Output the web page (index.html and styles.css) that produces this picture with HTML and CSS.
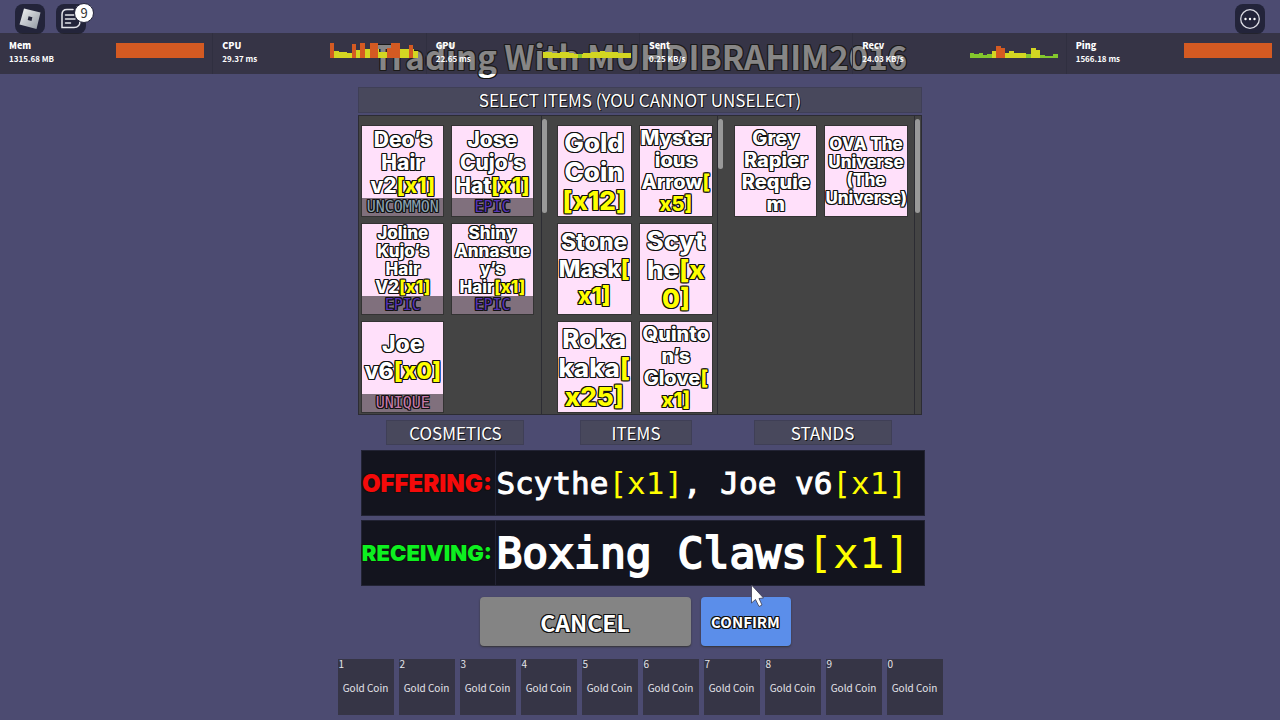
FILE: index.html
```html
<!DOCTYPE html>
<html lang="en">
<head>
<meta charset="utf-8">
<title>Trading</title>
<link rel="stylesheet" href="styles.css">
</head>
<body>
<header class="topbar">
  <button class="top-btn" aria-label="Menu"><svg width="30" height="30" viewBox="0 0 30 30"><defs><linearGradient id="g" x1="0" y1="0" x2="1" y2="1"><stop offset="0" stop-color="#f4f5f6"/><stop offset="1" stop-color="#8e959e"/></linearGradient></defs><path fill="url(#g)" fill-rule="evenodd" d="M9 4.500L25.500 8.500L21.500 25L4.500 20.500ZM13.600 12.300L12.700 16L16.500 17L17.400 13.200Z"/></svg></button>
  <button class="top-btn" aria-label="Chat"><svg width="30" height="30" viewBox="0 0 30 30" fill="none" stroke="#e4e4ea" stroke-width="1.500" stroke-linecap="round"><path d="M17 5.500H11Q6 5.500 6 10.500V23.500H18Q24 23.500 24 17"/><path d="M9.500 11H18M9.500 15H19M9.500 19H14.500"/></svg><span class="badge">9</span></button>
  <button class="top-btn top-more" aria-label="More"><svg width="30" height="30" viewBox="0 0 30 30"><circle cx="15" cy="15" r="9.300" fill="none" stroke="#dcdce4" stroke-width="1.300"/><g fill="#fff"><circle cx="10.500" cy="15" r="1.200"/><circle cx="15" cy="15" r="1.200"/><circle cx="19.500" cy="15" r="1.200"/></g></svg></button>
</header>

<section class="stats" aria-label="Performance">
  <div class="stat"><p class="stat-text"><b>Mem</b><span>1315.68 MB</span></p><svg class="graph" viewBox="0 0 88 15"><path fill="#d45a22" d="M0 0H88V15H0Z"/></svg></div>
  <div class="stat"><p class="stat-text"><b>CPU</b><span>29.37 ms</span></p><svg class="graph" viewBox="0 0 88 15"><path fill="#d3d622" d="M4 8H9V9H17V10H22V7H31V8H35V6H49V9H57V6H70V6H84V8H88V15H4Z"/><path fill="#d45a22" d="M0 0H4V15H0ZM22 1H26V15H22ZM30 0H35V15H30ZM40 0H48V15H40ZM57 5H61V0H70V15H57ZM79 2H83V15H79Z"/></svg></div>
  <div class="stat"><p class="stat-text"><b>GPU</b><span>22.65 ms</span></p><svg class="graph" viewBox="0 0 88 15"><path fill="#d3d622" d="M0 9H9V10H17V9H26V10H31V11H40V10H48V9H57V8H62V9H75V10H88V15H0Z"/><path fill="#83c72d" d="M35 11H39V15H35Z"/></svg></div>
  <div class="stat"><p class="stat-text"><b>Sent</b><span>0.25 KB/s</span></p></div>
  <div class="stat"><p class="stat-text"><b>Recv</b><span>24.03 KB/s</span></p><svg class="graph" viewBox="0 0 88 15"><path fill="#83c72d" d="M0 10H4V11H9V10H13V12H17V11H22V15H0ZM56 11H62V15H56ZM70 12H75V13H83V11H88V15H70Z"/><path fill="#d3d622" d="M22 8H26V15H22ZM35 10H39V8H44V10H56V15H35ZM61 5H66V7H70V15H61Z"/><path fill="#d45a22" d="M26 3H31V5H35V15H26Z"/></svg></div>
  <div class="stat"><p class="stat-text"><b>Ping</b><span>1566.18 ms</span></p><svg class="graph" viewBox="0 0 88 15"><path fill="#d45a22" d="M0 0H88V15H0Z"/></svg></div>
</section>

<main class="trade">
  <h1 class="title">Trading With MUHDIBRAHIM2016</h1>
  <h2 class="hint">SELECT ITEMS (YOU CANNOT UNSELECT)</h2>

  <div class="lists">
    <div class="list">
      <div class="cards">
        <button class="card"><span class="name size-m">Deo’s<br>Hair<br>v2<i>[x1]</i></span><span class="rarity uncommon">UNCOMMON</span></button>
        <button class="card"><span class="name size-m">Jose<br>Cujo’s<br>Hat<i>[x1]</i></span><span class="rarity epic">EPIC</span></button>
        <button class="card"><span class="name size-xs">Joline<br>Kujo’s<br>Hair<br>V2<i>[x1]</i></span><span class="rarity epic">EPIC</span></button>
        <button class="card"><span class="name size-xs">Shiny<br>Annasue<br>y’s<br>Hair<i>[x1]</i></span><span class="rarity epic">EPIC</span></button>
        <button class="card"><span class="name size-l">Joe<br>v6<i>[x0]</i></span><span class="rarity unique">UNIQUE</span></button>
      </div>
      <div class="scroll"><div class="thumb"></div></div>
    </div>
    <div class="list">
      <div class="cards cards-items">
        <button class="card"><span class="name size-xl">Gold<br>Coin<br><i>[x12]</i></span></button>
        <button class="card"><span class="name size-s">Myster<br>ious<br>Arrow<i>[<br>x5]</i></span></button>
        <button class="card"><span class="name size-l">Stone<br>Mask<i>[<br>x1]</i></span></button>
        <button class="card"><span class="name size-xl">Scyt<br>he<i>[x<br>0]</i></span></button>
        <button class="card"><span class="name size-xl">Roka<br>kaka<i>[<br>x25]</i></span></button>
        <button class="card"><span class="name size-s">Quinto<br>n’s<br>Glove<i>[<br>x1]</i></span></button>
      </div>
      <div class="scroll"><div class="thumb thumb-short"></div></div>
    </div>
    <div class="list">
      <div class="cards cards-stands">
        <button class="card"><span class="name size-s">Grey<br>Rapier<br>Requie<br>m</span></button>
        <button class="card"><span class="name size-xs">OVA The<br>Universe<br>(The<br>Universe)</span></button>
      </div>
      <div class="scroll"><div class="thumb"></div></div>
    </div>
  </div>

  <nav class="tabs">
    <button class="tab tab-cosmetics">COSMETICS</button>
    <button class="tab tab-items">ITEMS</button>
    <button class="tab tab-stands">STANDS</button>
  </nav>

  <div class="offer">
    <h3 class="offer-label offering">OFFERING:</h3>
    <p class="offer-text">Scythe<i>[x1]</i>, Joe v6<i>[x1]</i></p>
  </div>
  <div class="offer">
    <h3 class="offer-label receiving">RECEIVING:</h3>
    <p class="offer-text offer-large">Boxing Claws<i>[x1]</i></p>
  </div>

  <div class="actions">
    <button class="action cancel">CANCEL</button>
    <button class="action confirm">CONFIRM<svg class="cursor" width="16" height="26" viewBox="0 0 16 26"><path fill="#fff" stroke="#3a3a50" stroke-width=".8" d="M1.500 1V19L5.500 15.500L9 22.500L12 21L9 14.500L13.500 14Z"/></svg></button>
  </div>
</main>

<footer class="hotbar">
  <button class="slot"><kbd>1</kbd>Gold Coin</button>
  <button class="slot"><kbd>2</kbd>Gold Coin</button>
  <button class="slot"><kbd>3</kbd>Gold Coin</button>
  <button class="slot"><kbd>4</kbd>Gold Coin</button>
  <button class="slot"><kbd>5</kbd>Gold Coin</button>
  <button class="slot"><kbd>6</kbd>Gold Coin</button>
  <button class="slot"><kbd>7</kbd>Gold Coin</button>
  <button class="slot"><kbd>8</kbd>Gold Coin</button>
  <button class="slot"><kbd>9</kbd>Gold Coin</button>
  <button class="slot"><kbd>0</kbd>Gold Coin</button>
</footer>
</body>
</html>
```
FILE: styles.css
```css
* { box-sizing: border-box; margin: 0; padding: 0; }

:root {
  --ui: "Noto Sans CJK SC", "Noto Sans", sans-serif;
  --round: Inter, "Open Sans", sans-serif;
  --mono: "DejaVu Sans Mono", monospace;
  --outline: -1px -1px 0 #111, 1px -1px 0 #111, -1px 1px 0 #111, 1px 1px 0 #111, 0 1px 0 #111, 0 -1px 0 #111, 1px 0 0 #111, -1px 0 0 #111;
}

body {
  position: relative;
  min-height: 100vh;
  background: #4c4b71;
  color: #fff;
  font-family: var(--ui);
}

button { font: inherit; color: inherit; border: 0; background: none; }
i { font-style: normal; color: #ff0; }

.topbar { display: flex; gap: 11px; padding: 4px 15px 0; height: 37px; }
.top-btn { position: relative; width: 30px; height: 30px; border-radius: 8px; background: #23243a; }
.top-btn svg { display: block; }
.top-more { margin-left: auto; }
.badge {
  position: absolute; top: -1px; left: 18px;
  width: 20px; height: 20px; border-radius: 50%;
  background: #fff; color: #333; border: 1px solid #23243a;
  font: 13px/18px var(--ui); text-align: center;
}

.stats {
  position: absolute; top: 33px; left: 0; right: 0; z-index: 1;
  display: grid; grid-template-columns: repeat(6, 1fr);
  height: 41px; background: rgba(36, 35, 35, .55);
}
.stat { display: flex; justify-content: space-between; padding: 6px 8px 0 9px; border-right: 1px solid #302f40; }
.stat:last-child { border-right: 0; }
.stat-text { display: flex; flex-direction: column; font-size: 9px; line-height: 13px; font-weight: 700; white-space: nowrap; }
.stat-text span { font-size: 8px; }
.graph { width: 88px; height: 15px; margin-top: 4px; }

.trade { width: 44%; margin: 0 auto; }
.title { display: flex; justify-content: center; font-size: 33px; line-height: 38px; font-weight: 700; text-shadow: var(--outline); white-space: nowrap; }
.hint {
  margin-top: 12px; height: 26px; border: 1px solid #3f3f56; background: #48485c;
  font-size: 17px; line-height: 24px; font-weight: 400; text-align: center; text-shadow: 1px 1px 0 #111, -1px 0 0 #222;
}

.lists { display: grid; grid-template-columns: 189fr 177fr 197fr; margin-top: 2px; min-height: 300px; border: 1px solid #2c2c33; background: #444; }
.list { display: flex; }
.cards {
  flex: 1; display: grid; grid-template-columns: 1fr 1fr; grid-auto-rows: 90px;
  gap: 8px 9px; align-content: start; padding: 10px 8px 2px 3px;
}
.cards-items { padding-left: 10px; padding-right: 5px; }
.cards-stands { padding-left: 11px; padding-right: 7px; }
.card { display: flex; flex-direction: column; min-width: 0; background: #ffe0fa; outline: 1px solid #333; overflow: hidden; }
.name {
  flex: 1; display: block; align-content: center; width: 100%;
  font-family: var(--round); font-weight: 800; text-align: center; white-space: nowrap; text-shadow: var(--outline);
}
.size-xs { font-size: 17px; line-height: 18px; }
.size-s { font-size: 20px; line-height: 22px; }
.size-m { font-size: 21px; line-height: 23px; }
.size-l { font-size: 23px; line-height: 27px; }
.size-xl { font-size: 26px; line-height: 29px; }
.rarity { width: 100%; height: 18px; background: #80707d; font: 15px/18px var(--mono); text-align: center; text-shadow: var(--outline); }
.uncommon { color: #8ba3b3; }
.epic { color: #5734b8; }
.unique { color: #c77bab; }

.scroll { width: 7px; border-left: 1px solid #2c2c33; padding-top: 3px; }
.thumb { width: 5px; height: 94px; border-radius: 3px; background: #999; }
.thumb-short { height: 50px; }

.tabs { display: grid; grid-template-columns: 28fr 138fr 56fr 111fr 62fr 138fr 30fr; padding: 5px 0; }
.tab { height: 25px; background: #48485c; border: 1px solid #3f3f56; font-size: 17px; line-height: 20px; text-shadow: 1px 1px 0 #111; }
.tab-cosmetics { grid-column: 2; }
.tab-items { grid-column: 4; }
.tab-stands { grid-column: 6; }

.offer { display: grid; grid-template-columns: 134px 1fr; align-items: stretch; height: 66px; margin: 0 -3px 4px 3px; background: #13141e; border: 1px solid #222334; }
.offer-label { display: flex; align-items: center; justify-content: center; padding-right: 4px; border-right: 1px solid #222334; font-family: var(--round); font-weight: 900; text-shadow: var(--outline); white-space: nowrap; }
.offering { font-size: 24px; color: #f50a0a; }
.receiving { font-size: 22px; color: #0df020; }
.offer-text { font: 31px/64px var(--mono); white-space: nowrap; -webkit-text-stroke: 1px #fff; }
.offer-text i { -webkit-text-stroke: 0; }
.offer-large { font-size: 43px; -webkit-text-stroke-width: 2px; }

.actions { display: flex; justify-content: center; gap: 10px; padding: 7px 10px 0 0; }
.action { height: 49px; border-radius: 4px; font-weight: 700; text-shadow: var(--outline); box-shadow: 0 1px 2px #333; }
.cancel { width: 211px; background: #848484; font-size: 23px; line-height: 36px; }
.confirm { position: relative; width: 90px; background: #5b8eea; font-size: 15px; line-height: 24px; }
.cursor { position: absolute; top: -13px; left: 49px; }

.hotbar { display: flex; justify-content: center; gap: 5px; padding: 13px 0 5px; }
.slot { position: relative; width: 56px; height: 56px; background: #363546; font-size: 10px; white-space: nowrap; color: #e4e4ea; }
.slot kbd { position: absolute; top: -2px; left: 1px; font: 10px/14px var(--ui); }
```
